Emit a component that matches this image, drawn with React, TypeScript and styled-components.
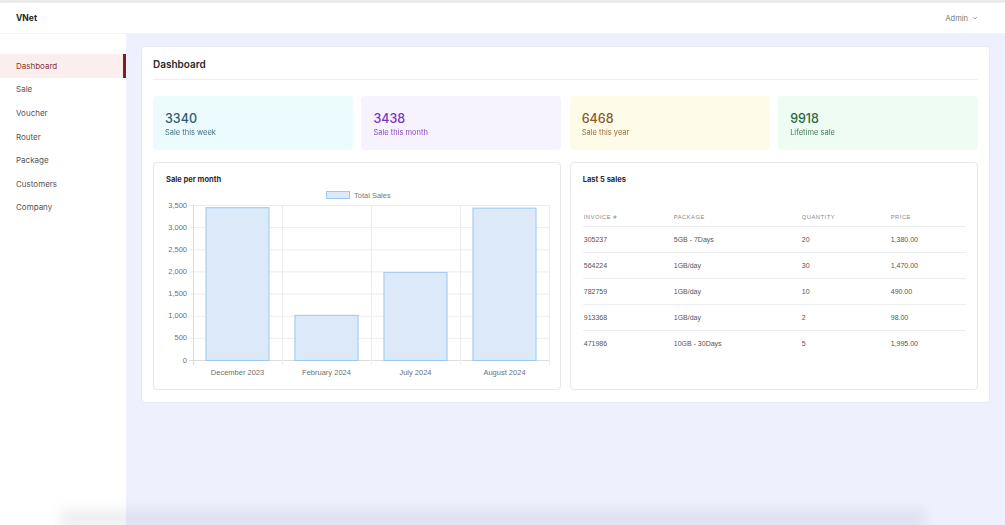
import React from "react";
import styled, { createGlobalStyle } from "styled-components";

const GlobalStyle = createGlobalStyle`
  html, body {
    margin: 0;
    padding: 0;
    height: 100%;
  }
  body {
    font-family: "Inter", "Liberation Sans", sans-serif;
    color: #333;
    overflow: hidden;
  }
  * {
    box-sizing: border-box;
  }
`;

const navItems = ["Dashboard", "Sale", "Voucher", "Router", "Package", "Customers", "Company"];

const stats = [
  { value: "3340", label: "Sale this week", bg: "#ecfcfe", color: "#2f5d72" },
  { value: "3438", label: "Sale this month", bg: "#f6f3fe", color: "#7a35c2" },
  { value: "6468", label: "Sale this year", bg: "#fefce9", color: "#8a5a2c" },
  { value: "9918", label: "Lifetime sale", bg: "#effcf3", color: "#2f6b45" },
];

const sales = [
  { invoice: "305237", pkg: "5GB - 7Days", qty: "20", price: "1,380.00" },
  { invoice: "564224", pkg: "1GB/day", qty: "30", price: "1,470.00" },
  { invoice: "782759", pkg: "1GB/day", qty: "10", price: "490.00" },
  { invoice: "913368", pkg: "1GB/day", qty: "2", price: "98.00" },
  { invoice: "471986", pkg: "10GB - 30Days", qty: "5", price: "1,995.00" },
];

const months = [
  { label: "December 2023", value: 3450 },
  { label: "February 2024", value: 1020 },
  { label: "July 2024", value: 1990 },
  { label: "August 2024", value: 3440 },
];

const SalesChart = () => {
  const left = 27;
  const right = 383;
  const top = 18;
  const bottom = 173;
  const max = 3500;
  const step = (right - left) / months.length;
  const barW = step * 0.72;
  const y = (v: number) => bottom - (v / max) * (bottom - top);
  const ticks = [0, 500, 1000, 1500, 2000, 2500, 3000, 3500];

  return (
    <svg width="384" height="194" viewBox="0 0 384 194" style={{ overflow: "visible" }}>
      <rect x="160.5" y="4.5" width="23" height="7" fill="#dbe9f8" stroke="#9cc8ef" />
      <text x="188" y="11" fontSize="7.5" fill="#777" fontFamily="Liberation Sans, sans-serif">
        Total Sales
      </text>
      {ticks.map((t) => (
        <g key={t}>
          <line x1={left - 4} x2={right} y1={y(t) + 0.5} y2={y(t) + 0.5} stroke={t === 0 ? "#dcdcdc" : "#ececec"} />
          <text
            x={left - 6}
            y={y(t) + 2.5}
            fontSize="7.5"
            fill="#6f6f6f"
            textAnchor="end"
            fontFamily="Liberation Sans, sans-serif"
          >
            {t.toLocaleString("en-US")}
          </text>
        </g>
      ))}
      {[0, 1, 2, 3, 4].map((i) => (
        <line
          key={i}
          x1={left + i * step + 0.5}
          x2={left + i * step + 0.5}
          y1={top}
          y2={bottom + 5}
          stroke={i === 0 ? "#dcdcdc" : "#ececec"}
        />
      ))}
      {months.map((m, i) => {
        const x = left + i * step + (step - barW) / 2;
        return (
          <g key={m.label}>
            <rect
              x={x + 0.5}
              y={y(m.value) + 0.5}
              width={barW - 1}
              height={bottom - y(m.value)}
              fill="#dbe9f8"
              stroke="#9cc8ef"
            />
            <text
              x={left + i * step + step / 2}
              y={bottom + 15}
              fontSize="7.5"
              fill="#6f6f6f"
              textAnchor="middle"
              fontFamily="Liberation Sans, sans-serif"
            >
              {m.label}
            </text>
          </g>
        );
      })}
    </svg>
  );
};

const App = () => {
  return (
    <Page>
      <GlobalStyle />
      <TopStrip />
      <Header>
        <Brand>VNet</Brand>
        <UserMenu>
          Admin
          <svg width="6" height="6" viewBox="0 0 10 10">
            <path d="M2 3.5 L5 6.5 L8 3.5" fill="none" stroke="#888" strokeWidth="1.4" />
          </svg>
        </UserMenu>
      </Header>
      <Body>
        <Sidebar>
          {navItems.map((item, i) => (
            <NavItem key={item} $active={i === 0}>
              {item}
            </NavItem>
          ))}
        </Sidebar>
        <Main>
          <Panel>
            <PanelTitle>Dashboard</PanelTitle>
            <StatGrid>
              {stats.map((s) => (
                <StatCard key={s.label} $bg={s.bg} $color={s.color}>
                  <StatValue>{s.value}</StatValue>
                  <StatLabel>{s.label}</StatLabel>
                </StatCard>
              ))}
            </StatGrid>
            <CardRow>
              <Card>
                <CardTitle>Sale per month</CardTitle>
                <ChartBox>
                  <SalesChart />
                </ChartBox>
              </Card>
              <Card>
                <CardTitle>Last 5 sales</CardTitle>
                <Table>
                  <thead>
                    <tr>
                      <Th style={{ width: 90 }}>Invoice #</Th>
                      <Th style={{ width: 128 }}>Package</Th>
                      <Th style={{ width: 89 }}>Quantity</Th>
                      <Th>Price</Th>
                    </tr>
                  </thead>
                  <tbody>
                    {sales.map((r) => (
                      <tr key={r.invoice}>
                        <Td>{r.invoice}</Td>
                        <Td>{r.pkg}</Td>
                        <Td>{r.qty}</Td>
                        <Td>{r.price}</Td>
                      </tr>
                    ))}
                  </tbody>
                </Table>
              </Card>
            </CardRow>
          </Panel>
        </Main>
      </Body>
      <BottomShadow />
    </Page>
  );
};

const Page = styled.div`
  position: relative;
  height: 100vh;
  display: flex;
  flex-direction: column;
  background: #ffffff;
`;

const TopStrip = styled.div`
  height: 3px;
  background: #ebebeb;
`;

const Header = styled.header`
  height: 31px;
  padding: 0 27px 0 16px;
  display: flex;
  align-items: center;
  justify-content: space-between;
  border-bottom: 1px solid #f3f3f5;
`;

const Brand = styled.div`
  font-size: 8.5px;
  font-weight: 700;
  color: #222;
`;

const UserMenu = styled.div`
  display: flex;
  align-items: center;
  gap: 4px;
  font-size: 7.5px;
  color: #777;
`;

const Body = styled.div`
  flex: 1;
  display: flex;
  min-height: 0;
`;

const Sidebar = styled.nav`
  width: 126px;
  flex-shrink: 0;
  padding-top: 20px;
  background: #ffffff;
  display: flex;
  flex-direction: column;
`;

const NavItem = styled.div<{ $active?: boolean }>`
  height: 23.6px;
  padding-left: 16px;
  display: flex;
  align-items: center;
  font-size: 8px;
  color: ${(p) => (p.$active ? "#8c3434" : "#555")};
  background: ${(p) => (p.$active ? "#fbeeee" : "transparent")};
  border-right: 3px solid ${(p) => (p.$active ? "#7b2020" : "transparent")};
`;

const Main = styled.main`
  flex: 1;
  min-width: 0;
  background: #eef0fd;
  padding: 12px 15px;
`;

const Panel = styled.section`
  background: #ffffff;
  border-radius: 4px;
  border: 1px solid #e7e9f5;
  padding: 0 11px 12px;
`;

const PanelTitle = styled.h1`
  margin: 0;
  height: 33px;
  padding-top: 2px;
  display: flex;
  align-items: center;
  font-size: 10px;
  font-weight: 600;
  color: #2a2a2a;
  border-bottom: 1px solid #eeeeee;
`;

const StatGrid = styled.div`
  margin-top: 16px;
  display: grid;
  grid-template-columns: repeat(4, minmax(0, 1fr));
  gap: 8.5px;
`;

const StatCard = styled.div<{ $bg: string; $color: string }>`
  height: 54px;
  border-radius: 4px;
  background: ${(p) => p.$bg};
  color: ${(p) => p.$color};
  padding: 16px 12px 0;
  display: flex;
  flex-direction: column;
  gap: 2px;
`;

const StatValue = styled.div`
  font-size: 12.5px;
  font-weight: 500;
  line-height: 14px;
`;

const StatLabel = styled.div`
  font-size: 7.5px;
  line-height: 10px;
  opacity: 0.9;
`;

const CardRow = styled.div`
  margin-top: 12px;
  display: grid;
  grid-template-columns: minmax(0, 1fr) minmax(0, 1fr);
  gap: 8.5px;
`;

const Card = styled.div`
  height: 228px;
  min-width: 0;
  border: 1px solid #e8e8ec;
  border-radius: 4px;
  padding: 12px 11px 0 12px;
`;

const CardTitle = styled.h2`
  margin: 0;
  font-size: 7.5px;
  font-weight: 700;
  color: #2a2a33;
  line-height: 10px;
`;

const ChartBox = styled.div`
  margin-top: 2px;
  height: 194px;
`;

const Table = styled.table`
  margin-top: 23px;
  width: 100%;
  border-collapse: collapse;
  font-family: "Liberation Sans", "Inter", sans-serif;
`;

const Th = styled.th`
  text-align: left;
  font-weight: 400;
  font-size: 5.8px;
  letter-spacing: 0.5px;
  text-transform: uppercase;
  color: #888;
  height: 18px;
  padding: 0 0 0 1px;
  border-bottom: 1px solid #eceef0;
`;

const Td = styled.td`
  font-size: 7px;
  color: #555;
  height: 26px;
  padding: 0 0 0 1px;
  border-bottom: 1px solid #eceef0;
  tr:last-child & {
    border-bottom: none;
  }
`;

const BottomShadow = styled.div`
  position: absolute;
  left: 60px;
  right: 80px;
  bottom: 0;
  height: 22px;
  pointer-events: none;
  background: linear-gradient(to bottom, rgba(120, 125, 150, 0) 0%, rgba(120, 125, 150, 0.2) 100%);
  filter: blur(6px);
`;

export default App;
